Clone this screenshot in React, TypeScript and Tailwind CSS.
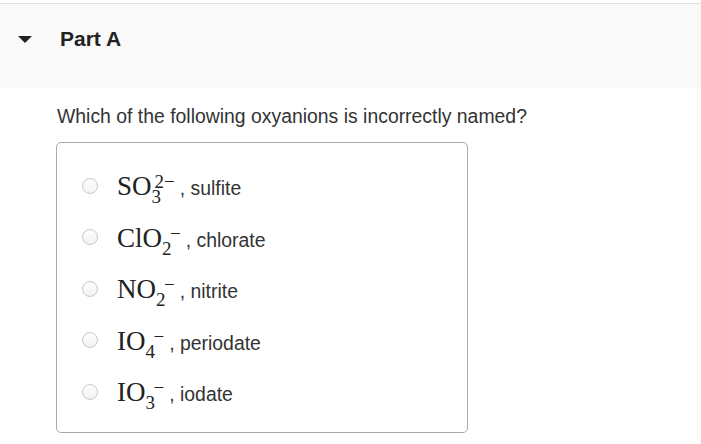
import React from "react";

type Opt = { base: string; sub: string; sup: string; supMl: string; name: string };

const opts: Opt[] = [
  { base: "SO", sub: "3", sup: "2−", supMl: "ml-[3px]", name: "sulfite" },
  { base: "ClO", sub: "2", sup: "−", supMl: "ml-[8px]", name: "chlorate" },
  { base: "NO", sub: "2", sup: "−", supMl: "ml-[8px]", name: "nitrite" },
  { base: "IO", sub: "4", sup: "−", supMl: "ml-[8px]", name: "periodate" },
  { base: "IO", sub: "3", sup: "−", supMl: "ml-[8px]", name: "iodate" },
];

function Formula({ o }: { o: Opt }) {
  return (
    <span
      className="inline-flex items-baseline text-[27px] leading-[24px] text-[#222]"
      style={{ fontFamily: '"Liberation Serif", "Times New Roman", serif' }}
    >
      <span>{o.base}</span>
      <span className="inline-grid text-[19px] leading-[14px]">
        <span className="col-start-1 row-start-1 relative top-[8px]">{o.sub}</span>
        <span className={`col-start-1 row-start-1 relative top-[-7px] ${o.supMl}`}>{o.sup}</span>
      </span>
    </span>
  );
}

export default function App() {
  return (
    <div
      className="w-[701px] h-[444px] bg-white overflow-hidden text-[#333]"
      style={{ fontFamily: '"Liberation Sans", Arial, sans-serif' }}
    >
      <div className="h-[3px]" />
      <div className="h-[85px] bg-[#f9f9f9] border-t border-[#dedede] flex items-start">
        <svg width="15" height="8" viewBox="0 0 15 8" className="ml-[18px] mt-[32px]">
          <polygon points="0,0 14,0 7,7" fill="#222" />
        </svg>
        <span className="ml-[27px] mt-[23px] text-[21px] leading-[24px] font-bold text-[#222]">Part A</span>
      </div>
      <div className="pl-[57px] pt-[15px]">
        <p className="text-[19.4px] leading-[26px] text-[#333]">
          Which of the following oxyanions is incorrectly named?
        </p>
        <div className="mt-[13px] ml-[-1px] w-[412px] h-[291px] border border-[#aaa] rounded-[5px] pt-[17px] pl-[25px] flex flex-col">
          {opts.map((o, i) => (
            <div key={i} className="flex items-center h-[51.5px] shrink-0">
              <span className="w-[16px] h-[16px] rounded-full border border-[#c8c8c8] bg-gradient-to-b from-[#fdfdfd] to-[#f3f3f3] shrink-0" />
              <span className="ml-[19px] flex items-baseline mt-[3px]">
                <Formula o={o} />
                <span className="text-[19.4px] leading-[24px] text-[#333] ml-[5px]">, {o.name}</span>
              </span>
            </div>
          ))}
        </div>
      </div>
    </div>
  );
}
